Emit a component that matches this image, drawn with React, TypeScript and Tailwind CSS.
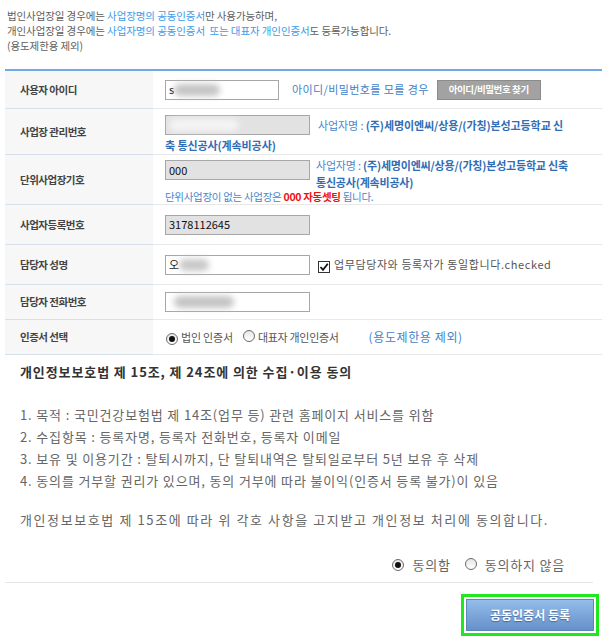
import React from "react";

const Radio = ({ on }: { on?: boolean }) => (
  <span className="inline-flex w-[12px] h-[12px] rounded-full border border-[#6b6b6b] bg-gradient-to-b from-[#e6e6e6] to-white items-center justify-center shrink-0">
    {on && <span className="w-[6px] h-[6px] rounded-full bg-[#111]" />}
  </span>
);

const Check = () => (
  <span className="inline-flex w-[12px] h-[12px] border border-[#333] bg-white items-center justify-center shrink-0">
    <svg width="10" height="10" viewBox="0 0 10 10">
      <path d="M1.5 5 L4 7.8 L8.8 1.8" stroke="#111" strokeWidth="1.8" fill="none" />
    </svg>
  </span>
);

const Blur = ({ w, c = "#bdbdbd" }: { w: number; c?: string }) => (
  <span className="inline-block h-[12px] rounded-full blur-[3px]" style={{ width: w, background: c }} />
);

const Label = ({ children }: { children: React.ReactNode }) => (
  <div className="w-[148px] shrink-0 bg-[#f7f7f7] border-b border-[#d5e0eb] flex items-center pl-[15px] text-[10.5px] font-bold text-[#444] tracking-[-0.5px]">
    {children}
  </div>
);

const Value = ({ children, className = "" }: { children: React.ReactNode; className?: string }) => (
  <div className={"flex-1 border-b border-[#e8e8e8] pl-[12px] " + className}>{children}</div>
);

const inputWhite = "h-[20px] border border-[#a7a7a7] bg-white flex items-center pl-[3px] text-[11px] text-[#111] shrink-0";
const inputGray = "h-[20px] border border-[#a7a7a7] bg-[#e2e2e2] flex items-center pl-[3px] text-[11px] text-[#111] shrink-0";

export default function App() {
  return (
    <div className="w-[607px] h-[641px] bg-white overflow-hidden font-['Noto_Sans_CJK_KR','Noto_Sans',sans-serif]">
      <div className="pt-[8px] pl-[7px] text-[10.5px] leading-[15px] text-[#5e5e5e] tracking-[-0.1px]">
        <div>
          법인사업장일 경우에는 <span className="text-[#3d9be9]">사업장명의 공동인증서</span>만 사용가능하며,
        </div>
        <div>
          개인사업장일 경우에는 <span className="text-[#3d9be9]">사업자명의 공동인증서&nbsp; 또는 대표자 개인인증서</span>도 등록가능합니다.
        </div>
        <div>(용도제한용 제외)</div>
      </div>

      <div className="mx-[5px] mt-[16px] border-t-2 border-[#72a9e2]">
        {/* row 1 */}
        <div className="flex h-[38px]">
          <Label>사용자 아이디</Label>
          <Value className="flex items-center">
            <div className={inputWhite + " w-[114px]"}>
              <span>s</span>
              <Blur w={46} c="#c4c4c4" />
            </div>
            <span className="ml-[13px] text-[11px] text-[#3f82c9] tracking-[0.4px]">아이디/비밀번호를 모를 경우</span>
            <span className="ml-[8px] h-[20px] w-[104px] bg-[#a2a2a2] border border-[#8c8c8c] text-white text-[9.5px] font-bold flex items-center justify-center tracking-[-0.4px]">
              아이디/비밀번호 찾기
            </span>
          </Value>
        </div>

        {/* row 2 */}
        <div className="flex h-[46px]">
          <Label>사업장 관리번호</Label>
          <Value className="pt-[6px] text-[11px] leading-[20px] text-[#4a86c8]">
            <span className={inputGray + " w-[145px] !inline-flex align-top"}>
              <Blur w={70} c="#f4f4f4" />
            </span>
            <span className="ml-[8px] tracking-[-0.1px]">
              사업자명 : <b className="text-[#2f6db5]">(주)세명이엔씨/상용/(가칭)본성고등학교 신</b>
            </span>
            <br />
            <b className="text-[#2f6db5] tracking-[-0.1px] leading-[16px]">축 통신공사(계속비공사)</b>
          </Value>
        </div>

        {/* row 3 */}
        <div className="flex h-[50px]">
          <Label>단위사업장기호</Label>
          <Value className="pt-[2px] flex flex-col">
            <div className="flex items-start">
              <div className={inputGray + " w-[145px] mt-[3px]"}>000</div>
              <div className="ml-[6px] text-[11px] leading-[17px] text-[#4a86c8] tracking-[-0.2px]">
                <div>
                  사업자명 : <b className="text-[#2f6db5]">(주)세명이엔씨/상용/(가칭)본성고등학교 신축</b>
                </div>
                <div>
                  <b className="text-[#2f6db5]">통신공사(계속비공사)</b>
                </div>
              </div>
            </div>
            <div className="text-[10.5px] leading-[12px] text-[#4a86c8] tracking-[-0.3px]">
              단위사업장이 없는 사업장은 <b className="text-[#f01010]">000 자동셋팅</b> 됩니다.
            </div>
          </Value>
        </div>

        {/* row 4 */}
        <div className="flex h-[40px]">
          <Label>사업자등록번호</Label>
          <Value className="flex items-center">
            <div className={inputGray + " w-[145px]"}>3178112645</div>
          </Value>
        </div>

        {/* row 5 */}
        <div className="flex h-[40px]">
          <Label>담당자 성명</Label>
          <Value className="flex items-center">
            <div className={inputWhite + " w-[145px]"}>
              <span>오</span>
              <Blur w={30} c="#c8c8c8" />
            </div>
            <span className="ml-[8px]">
              <Check />
            </span>
            <span className="ml-[4px] text-[11px] text-[#555] tracking-[0.6px]">업무담당자와 등록자가 동일합니다.checked</span>
          </Value>
        </div>

        {/* row 6 */}
        <div className="flex h-[35px]">
          <Label>담당자 전화번호</Label>
          <Value className="flex items-center">
            <div className={inputWhite + " w-[145px] pl-[8px]"}>
              <Blur w={60} c="#c4c4c4" />
            </div>
          </Value>
        </div>

        {/* row 7 */}
        <div className="flex h-[35px]">
          <Label>인증서 선택</Label>
          <Value className="flex items-center text-[11px] text-[#555] tracking-[-0.2px]">
            <span className="ml-[1px]">
              <Radio on />
            </span>
            <span className="ml-[3px]">법인 인증서</span>
            <span className="ml-[10px]">
              <Radio />
            </span>
            <span className="ml-[3px] tracking-[-0.3px]">대표자 개인인증서</span>
            <span className="ml-[30px] text-[12px] text-[#3f82c9] tracking-[0.6px]">(용도제한용 제외)</span>
          </Value>
        </div>
      </div>

      <div className="pl-[20px] mt-[8px] text-[13px] leading-[18px] font-bold text-[#333] tracking-[0.9px]">
        개인정보보호법 제 15조, 제 24조에 의한 수집·이용 동의
      </div>
      <div className="pl-[20px] mt-[23px] text-[13px] leading-[22px] text-[#666] tracking-[0.85px]">
        <div>1. 목적 : 국민건강보험법 제 14조(업무 등) 관련 홈페이지 서비스를 위함</div>
        <div>2. 수집항목 : 등록자명, 등록자 전화번호, 등록자 이메일</div>
        <div>3. 보유 및 이용기간 : 탈퇴시까지, 단 탈퇴내역은 탈퇴일로부터 5년 보유 후 삭제</div>
        <div>4. 동의를 거부할 권리가 있으며, 동의 거부에 따라 불이익(인증서 등록 불가)이 있음</div>
      </div>
      <div className="pl-[20px] mt-[17px] text-[13px] leading-[22px] text-[#666] tracking-[1.6px]">
        개인정보보호법 제 15조에 따라 위 각호 사항을 고지받고 개인정보 처리에 동의합니다.
      </div>

      <div className="mt-[23px] h-[22px] flex items-center justify-end pr-[42px] text-[13px] text-[#666] tracking-[0.8px]">
        <Radio on />
        <span className="ml-[8px]">동의함</span>
        <span className="ml-[14px]">
          <Radio />
        </span>
        <span className="ml-[8px]">동의하지 않음</span>
      </div>
      <div className="ml-[5px] mt-[6px] w-[588px] h-px bg-[#e6e6e6]" />

      <div className="mt-[11px] flex justify-end pr-[8px]">
        <div className="border-[3px] border-[#1fe81f] p-[2px]">
          <div className="w-[128px] h-[32px] border border-[#5d86ba] bg-gradient-to-b from-[#93bdea] to-[#6690c9] flex items-center justify-center text-white text-[12px] font-bold [text-shadow:0_1px_1px_rgba(40,70,120,0.6)]">
            공동인증서 등록
          </div>
        </div>
      </div>
    </div>
  );
}
